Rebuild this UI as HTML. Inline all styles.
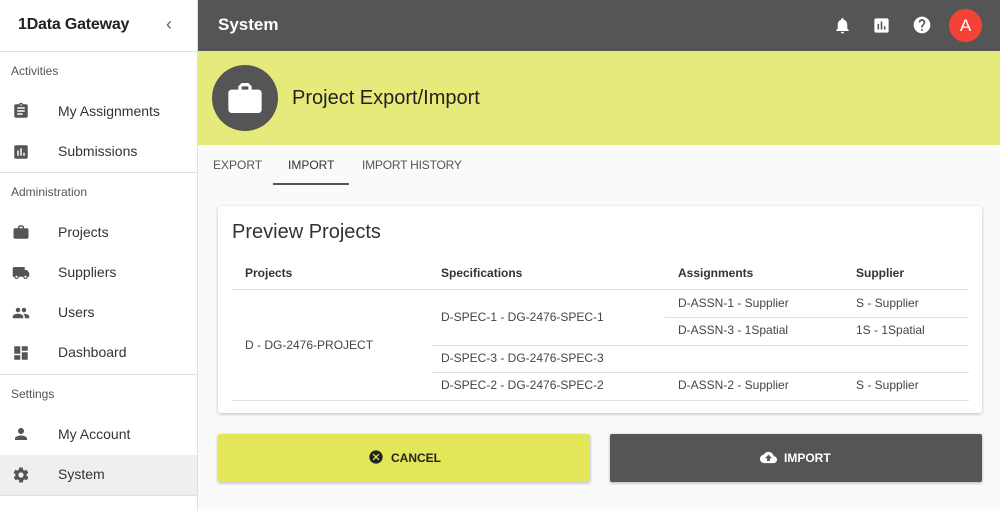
<!DOCTYPE html>
<html><head><style>
*{margin:0;padding:0;box-sizing:border-box}
body{width:1000px;height:511px;overflow:hidden;font-family:"Liberation Sans",sans-serif;background:#fafafa;position:relative;color:#333}
.a{position:absolute}
.sb{left:0;top:0;width:198px;height:511px;background:#fff;border-right:1px solid #e0e0e0}
.hl{height:1px;background:#e0e0e0;left:0;width:197px}
.sec{left:11px;font-size:12px;color:#555}
.it{left:58px;font-size:14px;color:#333}
.ic{left:12px;width:18px;height:18px}
.th{font-size:12px;color:#333;font-weight:bold}
.td{font-size:12px;color:#444}
.ln{height:1px;background:#e0e0e0}
</style></head><body>
<div class="a sb"></div>
<div class="a" style="left:18px;top:16px;font-size:16px;font-weight:bold;color:#222;letter-spacing:-0.2px">1Data Gateway</div>
<div class="a" style="left:166px;top:14px;font-size:18px;color:#666">&#8249;</div>
<div class="a hl" style="top:51px"></div>
<div class="a sec" style="top:64px">Activities</div>
<svg class="a ic" style="top:102px" viewBox="0 0 24 24"><path fill="#555" d="M19 3h-4.2C14.4 1.8 13.3 1 12 1s-2.4.8-2.8 2H5c-1.1 0-2 .9-2 2v14c0 1.1.9 2 2 2h14c1.1 0 2-.9 2-2V5c0-1.1-.9-2-2-2zm-7 0c.6 0 1 .4 1 1s-.4 1-1 1-1-.4-1-1 .4-1 1-1zm2 14H7v-2h7v2zm3-4H7v-2h10v2zm0-4H7V7h10v2z"/></svg>
<div class="a it" style="top:103px">My Assignments</div>
<svg class="a ic" style="top:143px" viewBox="0 0 24 24"><path fill="#555" d="M19 3H5c-1.1 0-2 .9-2 2v14c0 1.1.9 2 2 2h14c1.1 0 2-.9 2-2V5c0-1.1-.9-2-2-2zM9 17H7v-7h2v7zm4 0h-2V7h2v10zm4 0h-2v-4h2v4z"/></svg>
<div class="a it" style="top:143px">Submissions</div>
<div class="a hl" style="top:172px"></div>
<div class="a sec" style="top:185px">Administration</div>
<svg class="a ic" style="top:223px" viewBox="0 0 24 24"><path fill="#555" d="M20 7h-4V5l-2-2h-4L8 5v2H4c-1.1 0-2 .9-2 2v10c0 1.1.9 2 2 2h16c1.1 0 2-.9 2-2V9c0-1.1-.9-2-2-2zm-6 0h-4V5h4v2z"/></svg>
<div class="a it" style="top:224px">Projects</div>
<svg class="a ic" style="top:264px" viewBox="0 0 24 24"><path fill="#555" d="M20 8h-3V4H3c-1.1 0-2 .9-2 2v11h2c0 1.7 1.3 3 3 3s3-1.3 3-3h6c0 1.7 1.3 3 3 3s3-1.3 3-3h2v-5l-3-4zM6 18.5c-.8 0-1.5-.7-1.5-1.5s.7-1.5 1.5-1.5 1.5.7 1.5 1.5-.7 1.5-1.5 1.5zm12 0c-.8 0-1.5-.7-1.5-1.5s.7-1.5 1.5-1.5 1.5.7 1.5 1.5-.7 1.5-1.5 1.5z"/></svg>
<div class="a it" style="top:264px">Suppliers</div>
<svg class="a ic" style="top:304px" viewBox="0 0 24 24"><path fill="#555" d="M16 11c1.7 0 3-1.3 3-3s-1.3-3-3-3-3 1.3-3 3 1.3 3 3 3zm-8 0c1.7 0 3-1.3 3-3S9.7 5 8 5 5 6.3 5 8s1.3 3 3 3zm0 2c-2.3 0-7 1.2-7 3.5V19h14v-2.5c0-2.3-4.7-3.5-7-3.5zm8 0c-.3 0-.6 0-1 .1 1.2.8 2 2 2 3.4V19h6v-2.5c0-2.3-4.7-3.5-7-3.5z"/></svg>
<div class="a it" style="top:304px">Users</div>
<svg class="a ic" style="top:344px" viewBox="0 0 24 24"><path fill="#555" d="M3 13h8V3H3v10zm0 8h8v-6H3v6zm10 0h8V11h-8v10zm0-18v6h8V3h-8z"/></svg>
<div class="a it" style="top:344px">Dashboard</div>
<div class="a hl" style="top:374px"></div>
<div class="a sec" style="top:387px">Settings</div>
<svg class="a ic" style="top:425px" viewBox="0 0 24 24"><path fill="#555" d="M12 12c2.2 0 4-1.8 4-4s-1.8-4-4-4-4 1.8-4 4 1.8 4 4 4zm0 2c-2.7 0-8 1.3-8 4v2h16v-2c0-2.7-5.3-4-8-4z"/></svg>
<div class="a it" style="top:426px">My Account</div>
<div class="a" style="left:0;top:455px;width:197px;height:40px;background:#efefef"></div>
<svg class="a ic" style="top:466px" viewBox="0 0 24 24"><path fill="#555" d="M19.4 13c0-.3.1-.6.1-1s0-.7-.1-1l2.1-1.6c.2-.2.2-.4.1-.6l-2-3.5c-.1-.2-.4-.3-.6-.2l-2.5 1c-.5-.4-1.1-.7-1.700-1l-.4-2.6c0-.3-.2-.5-.5-.5h-4c-.3 0-.5.2-.5.4l-.4 2.7c-.6.2-1.1.6-1.7 1l-2.5-1c-.2-.1-.5 0-.6.2l-2 3.5c-.1.2-.1.5.1.6L4.6 11c0 .3-.1.7-.1 1s0 .7.1 1l-2.1 1.6c-.2.2-.2.4-.1.6l2 3.5c.1.2.4.3.6.2l2.5-1c.5.4 1.1.7 1.7 1l.4 2.6c0 .3.2.5.5.5h4c.3 0 .5-.2.5-.4l.4-2.7c.6-.2 1.2-.6 1.7-1l2.5 1c.2.1.5 0 .6-.2l2-3.5c.1-.2.1-.5-.1-.6L19.4 13zM12 15.5c-1.9 0-3.5-1.6-3.5-3.5s1.6-3.5 3.5-3.5 3.5 1.6 3.5 3.5-1.6 3.5-3.5 3.5z"/></svg>
<div class="a it" style="top:466px">System</div>
<div class="a hl" style="top:495px"></div>

<div class="a" style="left:198px;top:0;width:802px;height:51px;background:#555"></div>
<div class="a" style="left:218px;top:15px;font-size:17px;font-weight:bold;color:#fff">System</div>
<svg class="a" style="left:833px;top:16px;width:19px;height:19px" viewBox="0 0 24 24"><path fill="#fff" d="M12 22c1.1 0 2-.9 2-2h-4c0 1.1.9 2 2 2zm6-6v-5c0-3.1-1.6-5.6-4.5-6.3V4c0-.8-.7-1.5-1.5-1.5s-1.5.7-1.5 1.5v.7C7.6 5.4 6 7.9 6 11v5l-2 2v1h16v-1l-2-2z"/></svg>
<svg class="a" style="left:872px;top:16px;width:19px;height:19px" viewBox="0 0 24 24"><path fill="#fff" d="M19 3H5c-1.1 0-2 .9-2 2v14c0 1.1.9 2 2 2h14c1.1 0 2-.9 2-2V5c0-1.1-.9-2-2-2zM9 17H7v-7h2v7zm4 0h-2V7h2v10zm4 0h-2v-4h2v4z"/></svg>
<svg class="a" style="left:912px;top:15px;width:20px;height:20px" viewBox="0 0 24 24"><path fill="#fff" d="M12 2C6.5 2 2 6.5 2 12s4.5 10 10 10 10-4.5 10-10S17.5 2 12 2zm1 17h-2v-2h2v2zm2.1-7.8l-.9.9c-.7.7-1.2 1.4-1.2 2.9h-2v-.5c0-1.1.4-2.1 1.2-2.8l1.2-1.3c.4-.4.6-.9.6-1.4 0-1.1-.9-2-2-2s-2 .9-2 2H8c0-2.2 1.8-4 4-4s4 1.8 4 4c0 .9-.4 1.7-.9 2.2z"/></svg>
<div class="a" style="left:949px;top:9px;width:33px;height:33px;border-radius:50%;background:#f44336;color:#fff;font-size:17px;text-align:center;line-height:33px">A</div>

<div class="a" style="left:198px;top:51px;width:802px;height:94px;background:#e6ea7a"></div>
<div class="a" style="left:212px;top:65px;width:66px;height:66px;border-radius:50%;background:#555"></div>
<svg class="a" style="left:225px;top:78px;width:40px;height:40px" viewBox="0 0 24 24"><path fill="#fff" d="M20 7h-4V5l-2-2h-4L8 5v2H4c-1.1 0-2 .9-2 2v10c0 1.1.9 2 2 2h16c1.1 0 2-.9 2-2V9c0-1.1-.9-2-2-2zm-6 0h-4V5h4v2z"/></svg>
<div class="a" style="left:292px;top:87px;font-size:20px;color:#222">Project Export/Import</div>

<div class="a" style="left:213px;top:158px;font-size:12px;color:#555">EXPORT</div>
<div class="a" style="left:288px;top:158px;font-size:12px;color:#333">IMPORT</div>
<div class="a" style="left:273px;top:183px;width:76px;height:2px;background:#555"></div>
<div class="a" style="left:362px;top:158px;font-size:12px;color:#555;letter-spacing:-0.2px">IMPORT HISTORY</div>

<div class="a" style="left:218px;top:206px;width:764px;height:207px;background:#fff;border-radius:3px;box-shadow:0 1px 3px rgba(0,0,0,.25)"></div>
<div class="a" style="left:232px;top:221px;font-size:20px;color:#333">Preview Projects</div>
<div class="a th" style="left:245px;top:266px">Projects</div>
<div class="a th" style="left:441px;top:266px">Specifications</div>
<div class="a th" style="left:678px;top:266px">Assignments</div>
<div class="a th" style="left:856px;top:266px">Supplier</div>
<div class="a ln" style="left:232px;top:289px;width:737px"></div>
<div class="a td" style="left:245px;top:338px">D - DG-2476-PROJECT</div>
<div class="a td" style="left:441px;top:310px">D-SPEC-1 - DG-2476-SPEC-1</div>
<div class="a td" style="left:678px;top:296px">D-ASSN-1 - Supplier</div>
<div class="a td" style="left:856px;top:296px">S - Supplier</div>
<div class="a ln" style="left:665px;top:317px;width:304px"></div>
<div class="a td" style="left:678px;top:323px">D-ASSN-3 - 1Spatial</div>
<div class="a td" style="left:856px;top:323px">1S - 1Spatial</div>
<div class="a ln" style="left:432px;top:345px;width:537px"></div>
<div class="a td" style="left:441px;top:351px">D-SPEC-3 - DG-2476-SPEC-3</div>
<div class="a ln" style="left:432px;top:372px;width:537px"></div>
<div class="a td" style="left:441px;top:378px">D-SPEC-2 - DG-2476-SPEC-2</div>
<div class="a td" style="left:678px;top:378px">D-ASSN-2 - Supplier</div>
<div class="a td" style="left:856px;top:378px">S - Supplier</div>
<div class="a ln" style="left:232px;top:400px;width:737px"></div>

<div class="a" style="left:218px;top:434px;width:372px;height:48px;background:#e2e658;border-radius:2px;box-shadow:0 1px 3px rgba(0,0,0,.3)"></div>
<svg class="a" style="left:368px;top:449px;width:16px;height:16px" viewBox="0 0 24 24"><path fill="#222" d="M12 2C6.5 2 2 6.5 2 12s4.5 10 10 10 10-4.5 10-10S17.5 2 12 2zm5 13.6L15.6 17 12 13.4 8.4 17 7 15.6 10.6 12 7 8.4 8.4 7 12 10.6 15.6 7 17 8.4 13.4 12 17 15.6z"/></svg>
<div class="a" style="left:391px;top:451px;font-size:12px;font-weight:bold;color:#222">CANCEL</div>
<div class="a" style="left:610px;top:434px;width:372px;height:48px;background:#555;border-radius:2px;box-shadow:0 1px 3px rgba(0,0,0,.3)"></div>
<svg class="a" style="left:760px;top:449px;width:17px;height:17px" viewBox="0 0 24 24"><path fill="#fff" d="M19.4 10c-.7-3.4-3.7-6-7.4-6-2.9 0-5.4 1.6-6.7 4C2.3 8.4 0 10.9 0 14c0 3.3 2.7 6 6 6h13c2.8 0 5-2.2 5-5 0-2.6-2.1-4.8-4.6-5zM14 13v4h-4v-4H7l5-5 5 5h-3z"/></svg>
<div class="a" style="left:784px;top:451px;font-size:12px;font-weight:bold;color:#fff">IMPORT</div>
</body></html>
